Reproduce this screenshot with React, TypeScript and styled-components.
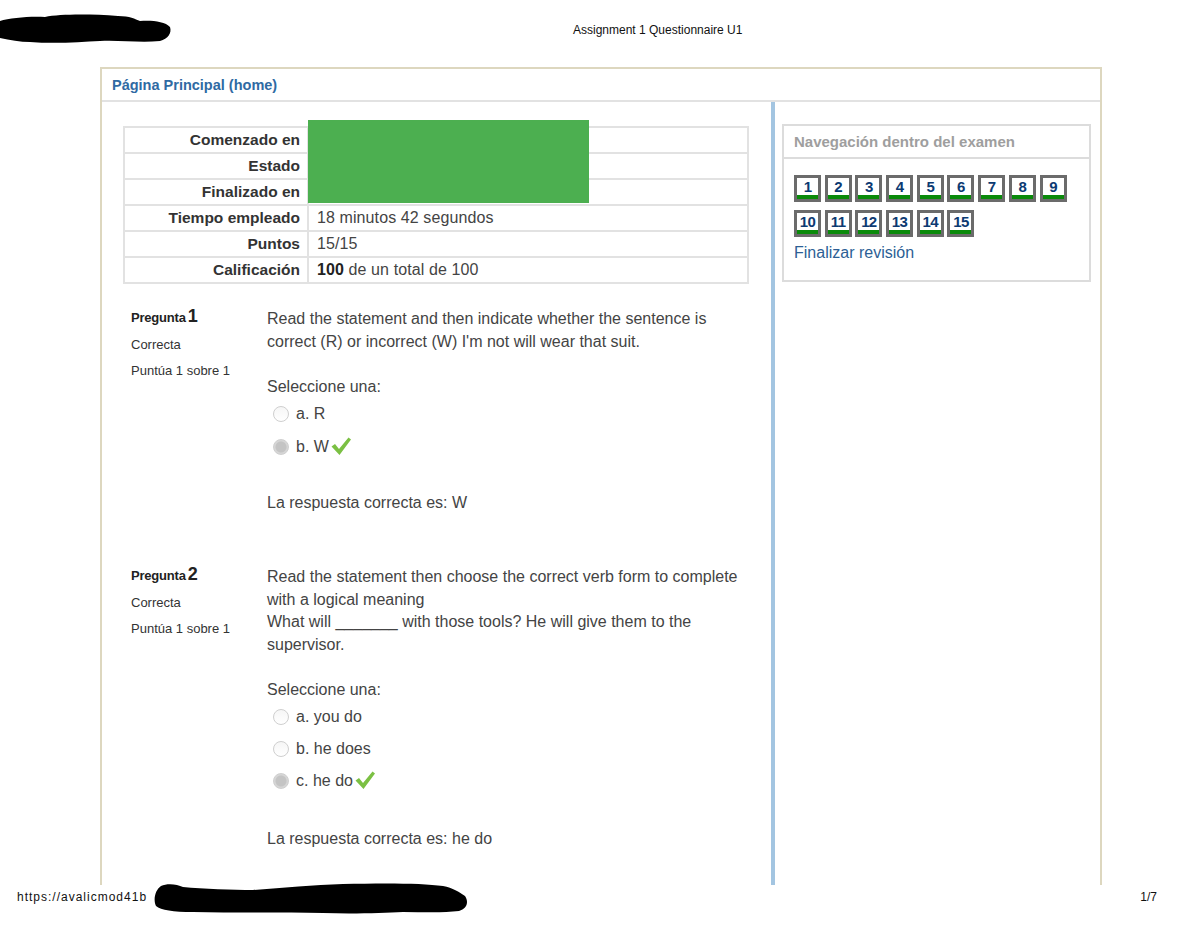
import React from "react";
import styled, { createGlobalStyle } from "styled-components";

const Global = createGlobalStyle`
  html, body { margin: 0; padding: 0; background: #fff; }
  body { font-family: "Liberation Sans", Arial, sans-serif; color: #333; }
  * { box-sizing: border-box; }
`;

const Page = styled.div`
  width: 1200px;
  height: 927px;
  position: relative;
  overflow: hidden;
`;

const TopBar = styled.header`
  height: 67px;
  display: flex;
  align-items: flex-start;
`;

const Blob = styled.svg`
  display: block;
  flex: none;
`;

const PrintTitle = styled.div`
  font-size: 12px;
  color: #111;
  margin-top: 23px;
  margin-left: 401px;
`;

const Frame = styled.div`
  margin-left: 100px;
  width: 1002px;
  height: 818px;
  border: 2px solid #ddd7bf;
  border-bottom: none;
  display: flex;
  flex-direction: column;
`;

const FrameHeader = styled.div`
  height: 33px;
  border-bottom: 2px solid #e2e2e2;
  padding-left: 10px;
  display: flex;
  align-items: center;
  font-size: 14.5px;
  font-weight: bold;
  color: #2f6aa3;
`;

const FrameBody = styled.div`
  flex: 1;
  display: flex;
`;

const MainCol = styled.main`
  width: 669px;
  padding: 24px 22px 0 21px;
`;

const BlueRule = styled.div`
  width: 4px;
  background: #a3c5e1;
  flex: none;
`;

const SideCol = styled.aside`
  flex: 1;
  padding: 22px 9px 0 7px;
`;

const SummaryWrap = styled.div`
  position: relative;
`;

const SummaryTable = styled.table`
  width: 626px;
  border-collapse: collapse;
  border: 2px solid #e2e2e2;
`;

const Row = styled.tr`
  height: 26px;
  border-bottom: 2px solid #e2e2e2;
`;

const Label = styled.th`
  width: 184px;
  text-align: right;
  padding: 0 7px 0 0;
  font-size: 15.5px;
  font-weight: bold;
  color: #333;
  border-right: 2px solid #e2e2e2;
  white-space: nowrap;
`;

const Value = styled.td`
  padding: 0 0 0 8px;
  font-size: 16px;
  color: #444;
  letter-spacing: 0.1px;
`;

const Redact = styled.div`
  position: absolute;
  left: 185px;
  top: -6px;
  width: 281px;
  height: 83px;
  background: #4caf50;
`;

const Question = styled.section<{ $top: number }>`
  display: grid;
  grid-template-columns: 144px 1fr;
  margin-top: ${(p) => p.$top}px;
`;

const Info = styled.div`
  padding-left: 8px;
`;

const QNo = styled.div`
  font-size: 13px;
  font-weight: bold;
  color: #222;
  line-height: 22px;
  margin-bottom: 3px;
  letter-spacing: -0.2px;
  span {
    font-size: 18px;
    margin-left: 2px;
  }
`;

const InfoLine = styled.div`
  font-size: 13px;
  line-height: 26px;
  color: #333;
`;

const Content = styled.div`
  padding-top: 3px;
  font-size: 16px;
  color: #444;
`;

const QText = styled.div`
  line-height: 22.5px;
  margin-bottom: 23px;
`;

const Prompt = styled.div`
  line-height: 22.5px;
`;

const Options = styled.div`
  margin-left: 6px;
  margin-top: -1px;
`;

const Option = styled.div<{ $tall?: boolean }>`
  height: ${(p) => (p.$tall ? 35 : 32)}px;
  display: flex;
  align-items: center;
`;

const Radio = styled.span<{ $checked?: boolean }>`
  width: 16px;
  height: 16px;
  border-radius: 50%;
  border: 1px solid #cfcfcf;
  background: ${(p) =>
    p.$checked
      ? "radial-gradient(circle, #c4c4c4 0 5px, #d6d6d6 6px)"
      : "linear-gradient(#f6f6f6, #ffffff)"};
  margin-right: 7px;
  flex: none;
`;

const Check = styled.svg`
  margin-left: 1px;
  margin-top: -2px;
`;

const Answer = styled.div<{ $gap: number }>`
  margin-top: ${(p) => p.$gap}px;
  line-height: 22.5px;
`;

const NavBlock = styled.div`
  border: 2px solid #dcdcdc;
  height: 158px;
`;

const NavHead = styled.div`
  height: 33px;
  border-bottom: 2px solid #dcdcdc;
  padding-left: 10px;
  display: flex;
  align-items: center;
  font-size: 15px;
  font-weight: bold;
  color: #9e9e9e;
`;

const NavBody = styled.div`
  padding: 16px 0 0 10px;
`;

const NavGrid = styled.div`
  display: grid;
  grid-template-columns: repeat(9, 27px);
  column-gap: 3.7px;
  row-gap: 8px;
`;

const NavBtn = styled.div`
  width: 27px;
  height: 27px;
  border: 3px solid #6b6b6b;
  background: #fff;
  display: flex;
  flex-direction: column;
`;

const NavNum = styled.div`
  flex: 1;
  display: flex;
  align-items: center;
  justify-content: center;
  font-size: 15px;
  font-weight: bold;
  color: #0c3a72;
  letter-spacing: -0.6px;
`;

const NavBar = styled.div`
  height: 4px;
  background: #0a8a0a;
`;

const FinishLink = styled.a`
  display: block;
  margin-top: 5px;
  font-size: 16px;
  color: #2c5f95;
  text-decoration: none;
  line-height: 22px;
`;

const Footer = styled.footer`
  height: 42px;
  display: flex;
  align-items: flex-start;
  padding-left: 17px;
`;

const FootText = styled.div`
  font-size: 12px;
  color: #111;
  margin-top: 5px;
  letter-spacing: 1px;
`;

const FootBlob = styled.svg`
  display: block;
  margin-left: 6px;
  margin-top: -3px;
  flex: none;
`;

const PageNo = styled.div`
  margin-left: auto;
  margin-right: 43px;
  margin-top: 5px;
  font-size: 12px;
  color: #111;
`;

const CheckMark = () => (
  <Check width="22" height="22" viewBox="0 0 22 22">
    <path
      d="M1.5 11.5 L5 9 L9 14 L18.5 2.5 L21 4.5 L9.5 20 Z"
      fill="#7bc043"
    />
  </Check>
);

const summary: [string, React.ReactNode][] = [
  ["Comenzado en", ""],
  ["Estado", ""],
  ["Finalizado en", ""],
  ["Tiempo empleado", "18 minutos 42 segundos"],
  ["Puntos", "15/15"],
  [
    "Calificación",
    <>
      <b style={{ color: "#222" }}>100</b> de un total de 100
    </>,
  ],
];

export default function App() {
  return (
    <Page>
      <Global />
      <TopBar>
        <Blob width="172" height="46" viewBox="0 0 172 46">
          <path
            d="M0 21 C10 18 30 16 45 17 C60 14 90 14 118 16 C130 16 135 19 140 21 C150 20 165 21 170 27 C172 33 168 39 160 41 C140 43 120 40 100 41 C80 42 55 44 30 42 C20 42 10 40 0 38 Z"
            fill="#000"
          />
        </Blob>
        <PrintTitle>Assignment 1 Questionnaire U1</PrintTitle>
      </TopBar>
      <Frame>
        <FrameHeader>Página Principal (home)</FrameHeader>
        <FrameBody>
          <MainCol>
            <SummaryWrap>
              <SummaryTable>
                <tbody>
                  {summary.map(([k, v]) => (
                    <Row key={k}>
                      <Label>{k}</Label>
                      <Value>{v}</Value>
                    </Row>
                  ))}
                </tbody>
              </SummaryTable>
              <Redact />
            </SummaryWrap>

            <Question $top={21}>
              <Info>
                <QNo>
                  Pregunta<span>1</span>
                </QNo>
                <InfoLine>Correcta</InfoLine>
                <InfoLine>Puntúa 1 sobre 1</InfoLine>
              </Info>
              <Content>
                <QText>
                  Read the statement and then indicate whether the sentence is
                  <br />
                  correct (R) or incorrect (W) I'm not will wear that suit.
                </QText>
                <Prompt>Seleccione una:</Prompt>
                <Options>
                  <Option>
                    <Radio />
                    a. R
                  </Option>
                  <Option $tall>
                    <Radio $checked />
                    b. W
                    <CheckMark />
                  </Option>
                </Options>
                <Answer $gap={27}>La respuesta correcta es: W</Answer>
              </Content>
            </Question>

            <Question $top={49}>
              <Info>
                <QNo>
                  Pregunta<span>2</span>
                </QNo>
                <InfoLine>Correcta</InfoLine>
                <InfoLine>Puntúa 1 sobre 1</InfoLine>
              </Info>
              <Content>
                <QText>
                  Read the statement then choose the correct verb form to complete
                  <br />
                  with a logical meaning
                  <br />
                  What will _______ with those tools? He will give them to the
                  <br />
                  supervisor.
                </QText>
                <Prompt>Seleccione una:</Prompt>
                <Options>
                  <Option>
                    <Radio />
                    a. you do
                  </Option>
                  <Option>
                    <Radio />
                    b. he does
                  </Option>
                  <Option>
                    <Radio $checked />
                    c. he do
                    <CheckMark />
                  </Option>
                </Options>
                <Answer $gap={31}>La respuesta correcta es: he do</Answer>
              </Content>
            </Question>
          </MainCol>
          <BlueRule />
          <SideCol>
            <NavBlock>
              <NavHead>Navegación dentro del examen</NavHead>
              <NavBody>
                <NavGrid>
                  {Array.from({ length: 15 }, (_, i) => (
                    <NavBtn key={i}>
                      <NavNum>{i + 1}</NavNum>
                      <NavBar />
                    </NavBtn>
                  ))}
                </NavGrid>
                <FinishLink href="#">Finalizar revisión</FinishLink>
              </NavBody>
            </NavBlock>
          </SideCol>
        </FrameBody>
      </Frame>
      <Footer>
        <FootText>https://avalicmod41b</FootText>
        <FootBlob width="316" height="34" viewBox="0 0 316 34">
          <path
            d="M8 4 C14 1 24 2 30 5 C50 7 80 8 100 8 C130 6 160 3 190 2 C230 1 270 1 290 4 C300 6 306 10 312 14 C316 20 314 27 306 29 C290 31 270 30 250 30 C230 31 200 32 170 31 C130 30 80 31 40 30 C20 30 8 28 3 24 C0 18 2 8 8 4 Z"
            fill="#000"
          />
        </FootBlob>
        <PageNo>1/7</PageNo>
      </Footer>
    </Page>
  );
}
